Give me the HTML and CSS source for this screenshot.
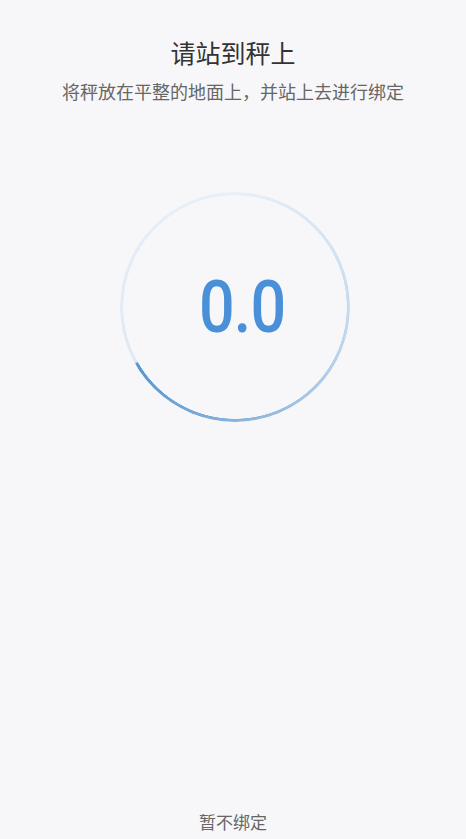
FILE: index.html
```html
<!DOCTYPE html>
<html lang="zh-CN">
<head>
    <meta charset="UTF-8">
    <meta name="viewport" content="width=device-width, initial-scale=1.0">
    <title>绑定秤</title>
    <link rel="stylesheet" href="styles.css">
</head>
<body>
    <div class="page">
        <div class="header">
            <h1 class="title">请站到秤上</h1>
            <p class="subtitle">将秤放在平整的地面上，并站上去进行绑定</p>
        </div>

        <div class="scale">
            <div class="ring"></div>
            <div class="weight">0.0</div>
        </div>

        <div class="skip">暂不绑定</div>
    </div>
</body>
</html>
```

FILE: styles.css
```css
* {
    margin: 0;
    padding: 0;
    box-sizing: border-box;
}

body {
    background-color: #f7f7f9;
    font-family: "Noto Sans CJK SC", "Noto Sans", sans-serif;
}

.page {
    display: flex;
    flex-direction: column;
    align-items: center;
    height: 839px;
}

.header {
    text-align: center;
    padding-top: 35px;
}

.title {
    font-size: 25px;
    font-weight: normal;
    line-height: 34px;
    color: #333333;
}

.subtitle {
    margin-top: 9px;
    font-size: 18px;
    line-height: 26px;
    color: #666666;
}

/* weight dial */
.scale {
    position: relative;
    width: 230px;
    height: 230px;
    margin-top: 88px;
    margin-left: 3px;
    display: flex;
    align-items: center;
    justify-content: center;
}

.ring {
    position: absolute;
    inset: 0;
    border-radius: 50%;
    background: conic-gradient(
        #e9eff7 0deg,
        #d3e2f1 60deg,
        #bdd5ec 110deg,
        #8cb5dd 175deg,
        #5896cf 240deg,
        #e0e9f3 241deg,
        #e9eff7 360deg
    );
    -webkit-mask: radial-gradient(circle, transparent 111.5px, #000 112px);
    mask: radial-gradient(circle, transparent 111.5px, #000 112px);
}

.weight {
    margin-left: 16px;
    font-family: Roboto, sans-serif;
    font-size: 73px;
    font-weight: 500;
    line-height: 1;
    color: #4a90d9;
    letter-spacing: -1px;
    transform: scaleX(0.86);
}

.skip {
    margin-top: auto;
    padding-bottom: 5px;
    font-size: 17px;
    line-height: 24px;
    color: #666666;
}
```
